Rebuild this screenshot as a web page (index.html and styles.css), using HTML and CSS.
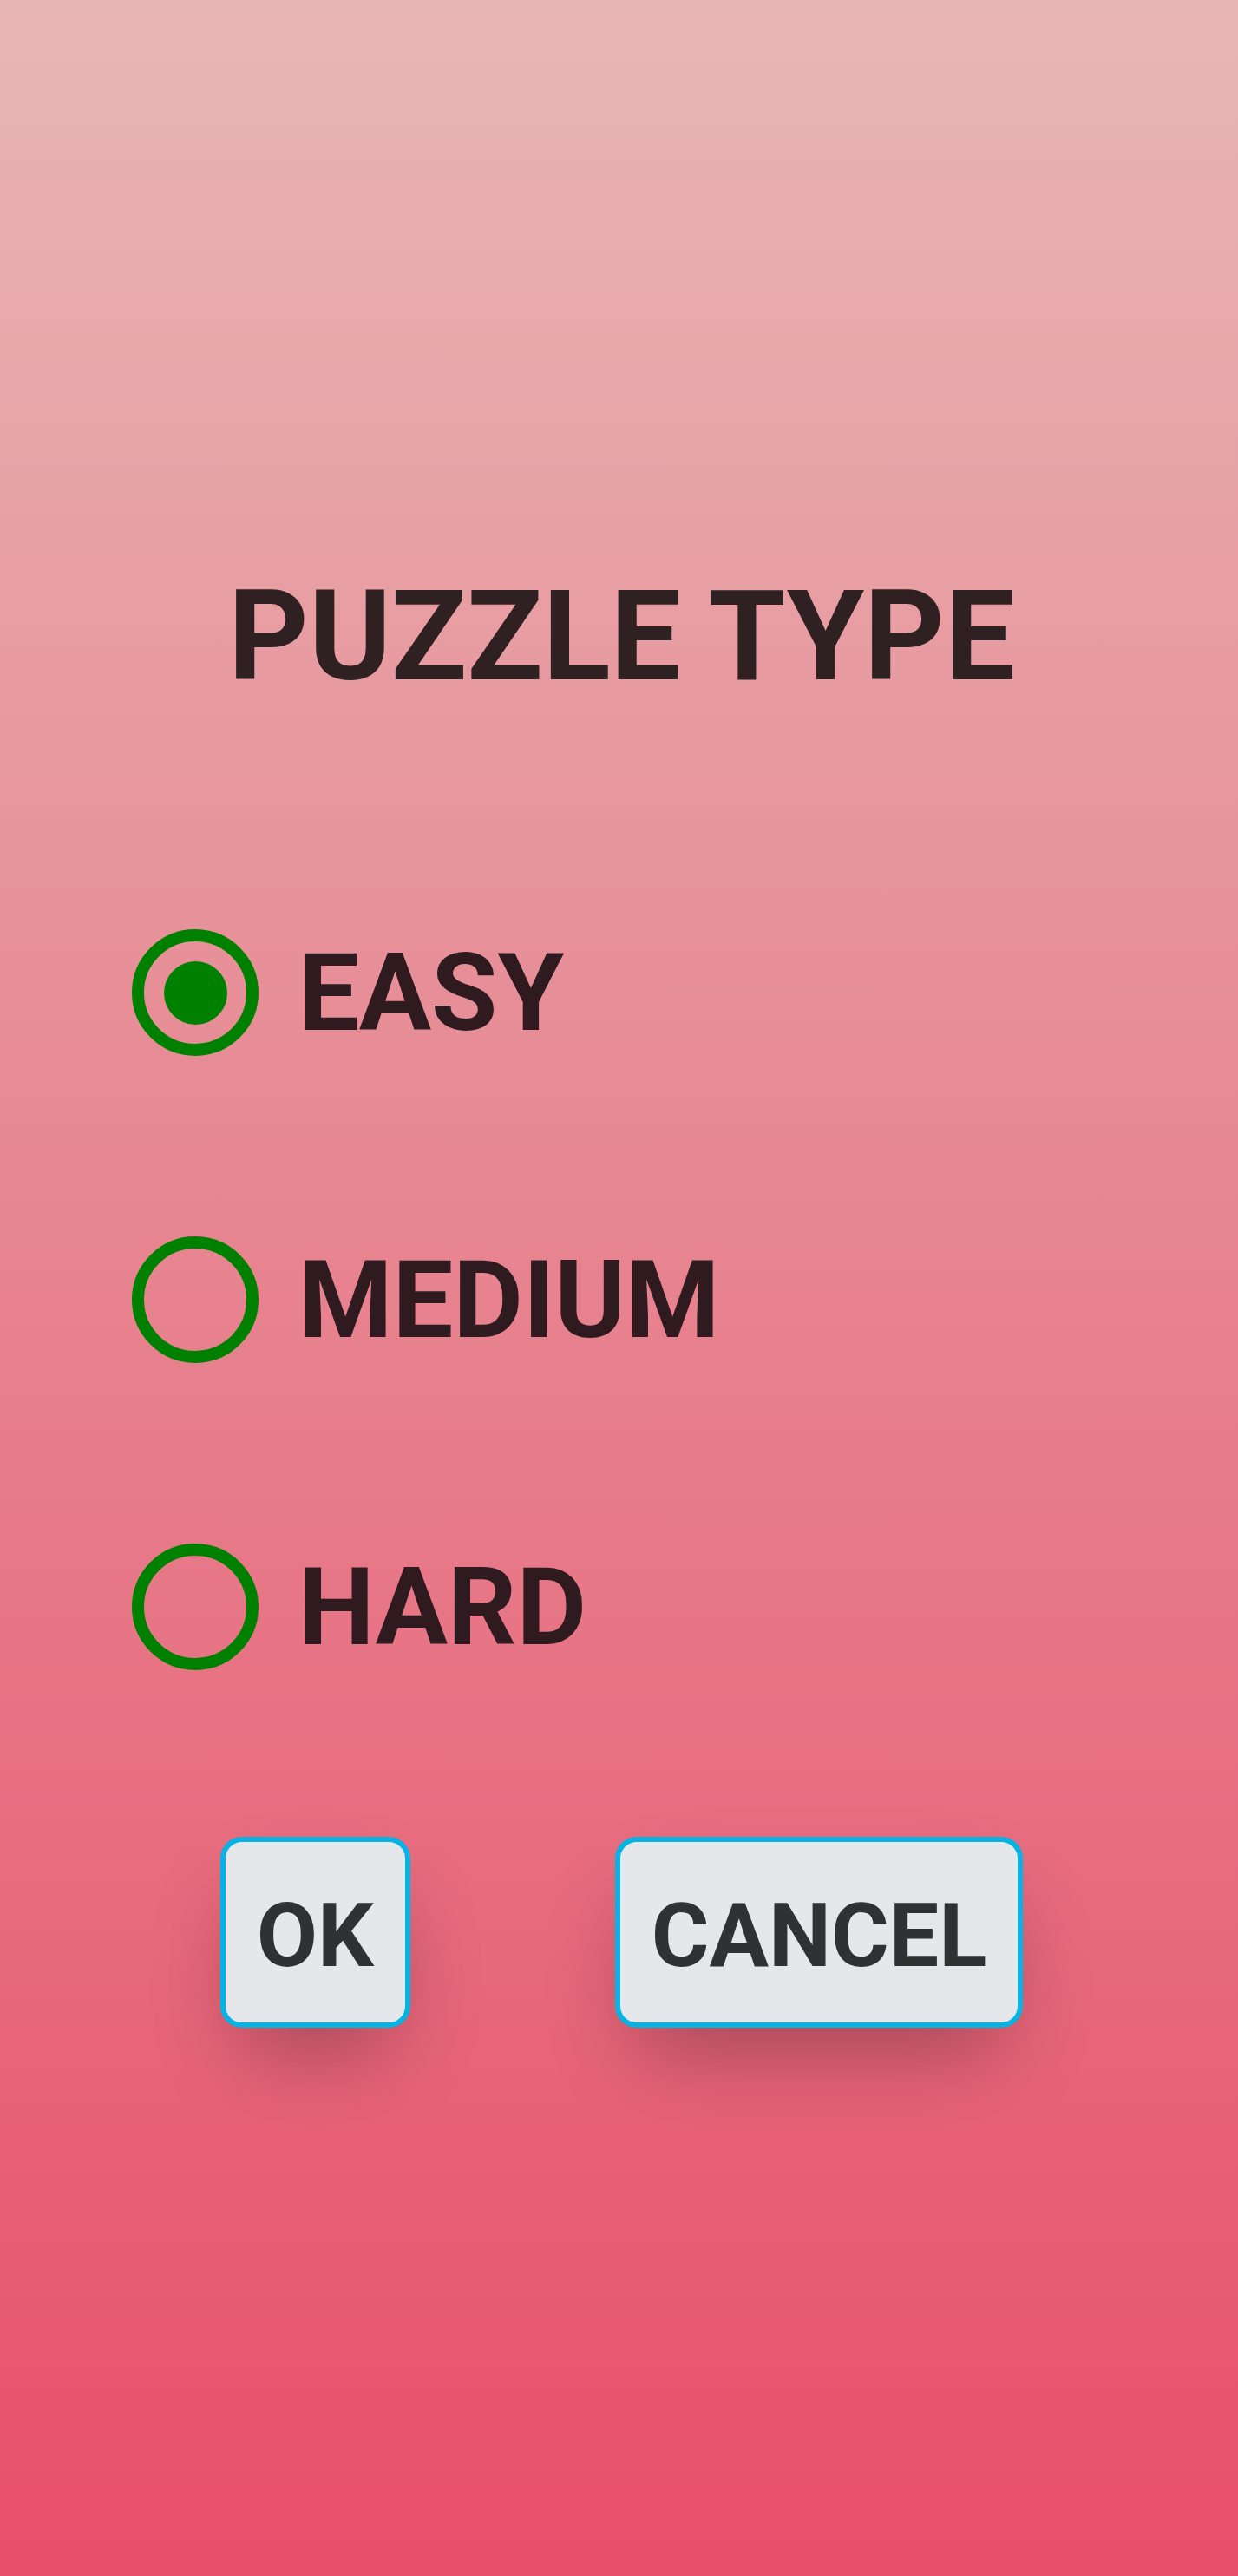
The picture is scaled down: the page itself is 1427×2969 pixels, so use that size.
FILE: index.html
```html
<!DOCTYPE html>
<html lang="en">
<head>
<meta charset="utf-8">
<title>Puzzle Type</title>
<link rel="stylesheet" href="styles.css">
</head>
<body>
<main class="page">
  <h1 class="title">PUZZLE TYPE</h1>
  <div class="options" role="radiogroup">
    <div class="option" role="radio" aria-checked="true">
      <span class="radio"><span class="dot"></span></span>
      <span class="label">EASY</span>
    </div>
    <div class="option" role="radio" aria-checked="false">
      <span class="radio"></span>
      <span class="label">MEDIUM</span>
    </div>
    <div class="option" role="radio" aria-checked="false">
      <span class="radio"></span>
      <span class="label">HARD</span>
    </div>
  </div>
  <div class="actions">
    <button class="btn btn-ok" type="button">OK</button>
    <button class="btn btn-cancel" type="button">CANCEL</button>
  </div>
</main>
</body>
</html>
```

FILE: styles.css
```css
html, body {
  margin: 0;
  padding: 0;
}

body {
  min-height: 2969px;
  background: linear-gradient(to bottom, #e8b6b5 0%, #e7838f 50%, #e84f69 100%);
  font-family: Roboto, "Liberation Sans", Arial, sans-serif;
}

.page {
  display: flex;
  flex-direction: column;
  padding-top: 649px;
  padding-left: 6px;
}

.title {
  margin: 0;
  text-align: center;
  font-size: 144px;
  font-weight: 700;
  line-height: normal;
  color: #2f2022;
}

.options {
  display: flex;
  flex-direction: column;
  gap: 208px;
  margin-top: 253px;
  padding-left: 146px;
}

.option {
  display: flex;
  align-items: center;
  gap: 46px;
  height: 146px;
}

.radio {
  box-sizing: border-box;
  width: 146px;
  height: 146px;
  border: 14px solid #008000;
  border-radius: 50%;
  display: flex;
  align-items: center;
  justify-content: center;
  flex: none;
}

.dot {
  width: 73px;
  height: 73px;
  border-radius: 50%;
  background: #008000;
}

.label {
  font-size: 124px;
  font-weight: 700;
  line-height: normal;
  color: #2f1b1f;
}

.actions {
  display: flex;
  justify-content: center;
  gap: 236px;
  margin-top: 192px;
}

.btn {
  box-sizing: border-box;
  height: 220px;
  padding: 8px 36px 0;
  border: 6px solid #06b4e4;
  border-radius: 25px;
  background: #e5e7eb;
  color: #2f3133;
  font-family: Roboto, "Liberation Sans", Arial, sans-serif;
  font-size: 102px;
  font-weight: 700;
  line-height: normal;
  box-shadow: 0 50px 100px -24px rgba(0, 0, 0, 0.3);
}
```
